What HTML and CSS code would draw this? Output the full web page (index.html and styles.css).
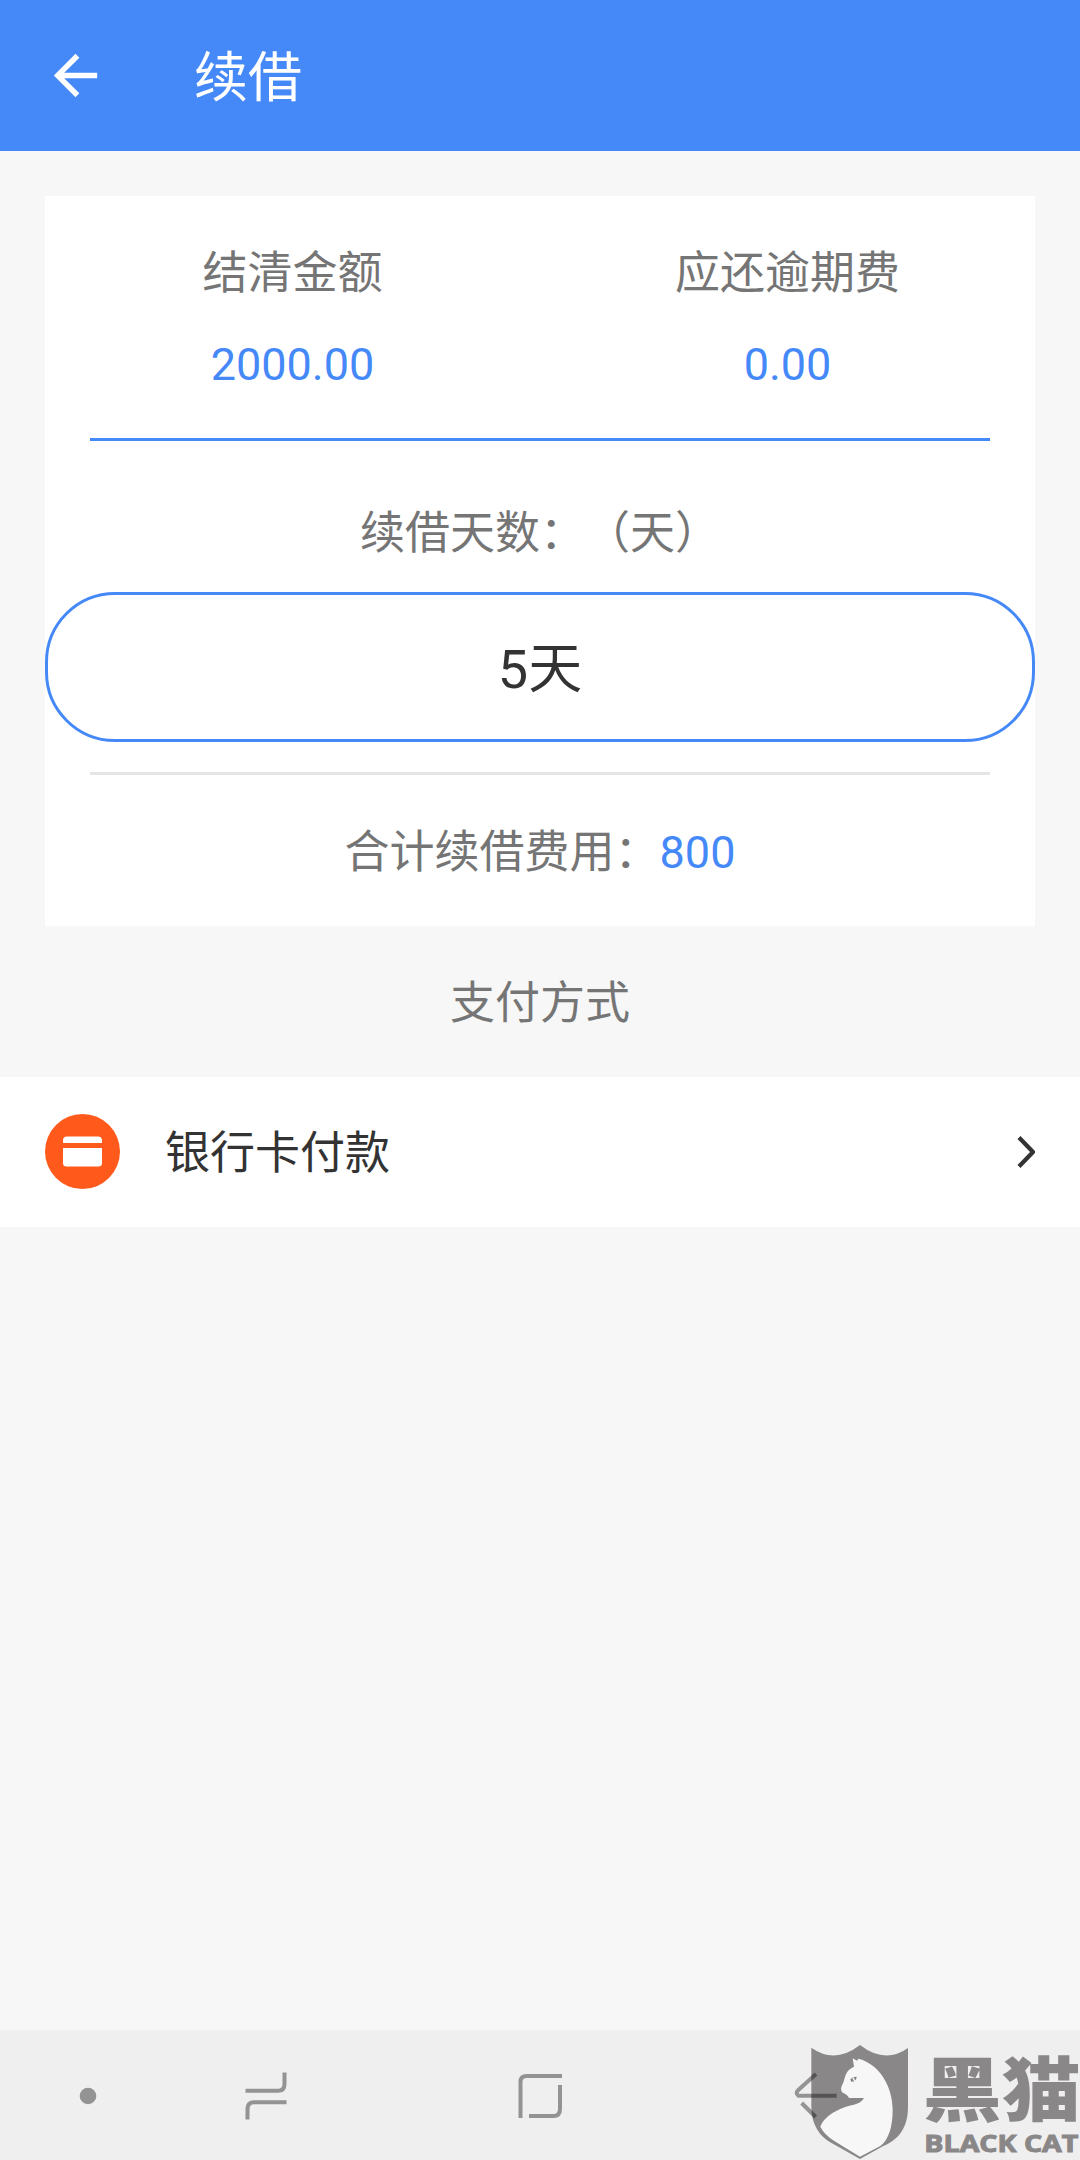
FILE: index.html
```html
<!DOCTYPE html>
<html lang="zh-CN">
<head>
<meta charset="utf-8">
<title>续借</title>
<link rel="stylesheet" href="styles.css">
</head>
<body>
<div class="screen">
  <header class="app-bar">
    <svg class="back" viewBox="0 0 24 24"><path d="M20 11H7.83l5.59-5.59L12 4l-8 8 8 8 1.41-1.41L7.83 13H20v-2z"/></svg>
    <h1 class="title">续借</h1>
  </header>

  <main class="content">
    <section class="card">
      <div class="amounts">
        <div class="amount"><span class="label">结清金额</span><span class="value">2000.00</span></div>
        <div class="amount"><span class="label">应还逾期费</span><span class="value">0.00</span></div>
      </div>
      <p class="days-label">续借天数：（天）</p>
      <button class="days">5天</button>
      <p class="total">合计续借费用：<span class="total-value">800</span></p>
    </section>

    <h2 class="section-title">支付方式</h2>

    <a class="pay-row">
      <svg class="pay-icon" viewBox="0 0 75 75">
        <circle cx="37.5" cy="37.5" r="37.5" fill="#ff5a1c"/>
        <path d="M18 29v-2.500a4 4 0 0 1 4-4h31a4 4 0 0 1 4 4V29zM18 34h39V49a3.500 3.500 0 0 1-3.500 3.500h-32A3.500 3.500 0 0 1 18 49z" fill="#fff"/>
      </svg>
      <span class="pay-name">银行卡付款</span>
      <svg class="chevron" viewBox="0 0 18 32"><path d="M2 1.500 16 16 2 30.500"/></svg>
    </a>
  </main>

  <nav class="nav-bar">
    <svg class="nav-dot" viewBox="0 0 18 18"><circle cx="9" cy="9" r="8.300"/></svg>
    <svg class="nav-icon recents" viewBox="0 0 44 48"><path d="M1.500 18.800H34Q40.500 18.800 40.500 12V.500M42.500 30.200H10Q3.500 30.200 3.500 37V47.500"/></svg>
    <svg class="nav-icon home" viewBox="0 0 44 46"><path d="M2.500 45V9Q2.500 3 8.500 3H44M42 12V36Q42 43 35.500 43H11"/></svg>
  </nav>

  <svg class="watermark" viewBox="0 0 900 450">
    <g fill="#8a8788">
      <path d="M94 113Q165 163 240 105Q315 163 384 114V290C384 360 350 390 310 408L240 447L160 402C120 382 94 345 94 290Z"/>
      <text class="mark-cn" transform="translate(428 319) scale(1 .92)" textLength="474" lengthAdjust="spacingAndGlyphs">黑猫</text>
      <text class="mark-en" x="433" y="427" textLength="462" lengthAdjust="spacingAndGlyphs">BLACK CAT</text>
    </g>
    <path fill="#f7f7f7" d="M218 145L231 152L236 146C300 164 338 230 338 300C338 350 326 390 301 408L240 440L164 394Q132 373 121 350C133 316 180 292 222 284Q244 279 252 264L207 264Q203 253 188 248Q180 240 185 228C198 208 190 184 222 170Z"/>
    <path fill="#8a8788" d="M212 208Q216 199 230 200Q229 216 213 215Z"/>
    <path d="M218 202l7 12" stroke="#f7f7f7" stroke-width="4"/>
    <path class="mark-back" d="M108 192L55 240Q45 250 55 257H170M65 279L107 321"/>
  </svg>
</div>
</body>
</html>
```
FILE: styles.css
```css
* { box-sizing: border-box; margin: 0; padding: 0; }
body {
  background: #f7f7f7;
  font-family: Roboto, "Noto Sans CJK SC", sans-serif;
  font-size: 45px;
  line-height: 66px;
  color: #757575;
  text-spacing-trim: space-all;
}
svg { display: block; flex: none; }
.screen {
  position: relative;
  display: flex;
  flex-direction: column;
  width: 1080px;
  height: 2160px;
  overflow: hidden;
}
.app-bar {
  display: flex;
  align-items: center;
  gap: 86px;
  height: 151px;
  padding-left: 43px;
  background: #4589f9;
}
.back { width: 65px; height: 65px; fill: #fff; }
.title { padding-top: 6px; font-size: 54px; font-weight: 400; color: #fff; }
.content { flex: 1; }
.card { height: 730px; margin: 45px 45px 0; background: #fff; text-align: center; }
.amounts { position: relative; display: flex; height: 245px; padding-top: 45px; }
.amounts::after, .days::after {
  content: "";
  position: absolute;
  left: 45px;
  right: 45px;
  bottom: 0;
  height: 3px;
  background: #4589f9;
}
.amount { flex: 1; display: flex; flex-direction: column; gap: 25px; }
.value, .total-value { color: #4589f9; }
.days-label { padding-top: 60px; }
.days {
  position: relative;
  display: block;
  width: 990px;
  height: 150px;
  margin-top: 25px;
  padding-top: 6px;
  border: 3px solid #4589f9;
  border-radius: 70px;
  background: #fff;
  color: #333;
  font: inherit;
  font-size: 54px;
}
.days::after { left: 42px; right: 42px; bottom: -36px; background: #e5e5e5; }
.total { padding-top: 78px; }
.section-title { padding: 45px 0 40px; font-size: 45px; font-weight: 400; text-align: center; }
.pay-row { display: flex; align-items: center; height: 150px; padding: 0 45px; background: #fff; color: #333; }
.pay-icon { width: 75px; height: 75px; margin-bottom: 1px; }
.pay-name { flex: 1; padding: 4px 0 0 45px; }
.chevron { width: 18px; height: 32px; fill: none; stroke: #333; stroke-width: 4.2; }
.nav-bar {
  display: flex;
  align-items: center;
  height: 130px;
  padding: 1px 0 0 79px;
  background: #efefef;
}
.nav-dot { width: 18px; height: 18px; fill: #939393; }
.nav-icon { width: 44px; fill: none; stroke: #939393; stroke-width: 4; }
.recents { height: 48px; margin-left: 147px; }
.home { height: 46px; margin-left: 230px; }
.watermark { position: absolute; right: 0; bottom: 0; width: 300px; height: 150px; }
.mark-cn { font: 900 231px "Noto Sans CJK SC", sans-serif; }
.mark-en { font: 700 70px "Open Sans", sans-serif; stroke: #8a8788; stroke-width: 3; }
.mark-back { fill: none; stroke: #000; stroke-opacity: .38; stroke-width: 12; }
```
